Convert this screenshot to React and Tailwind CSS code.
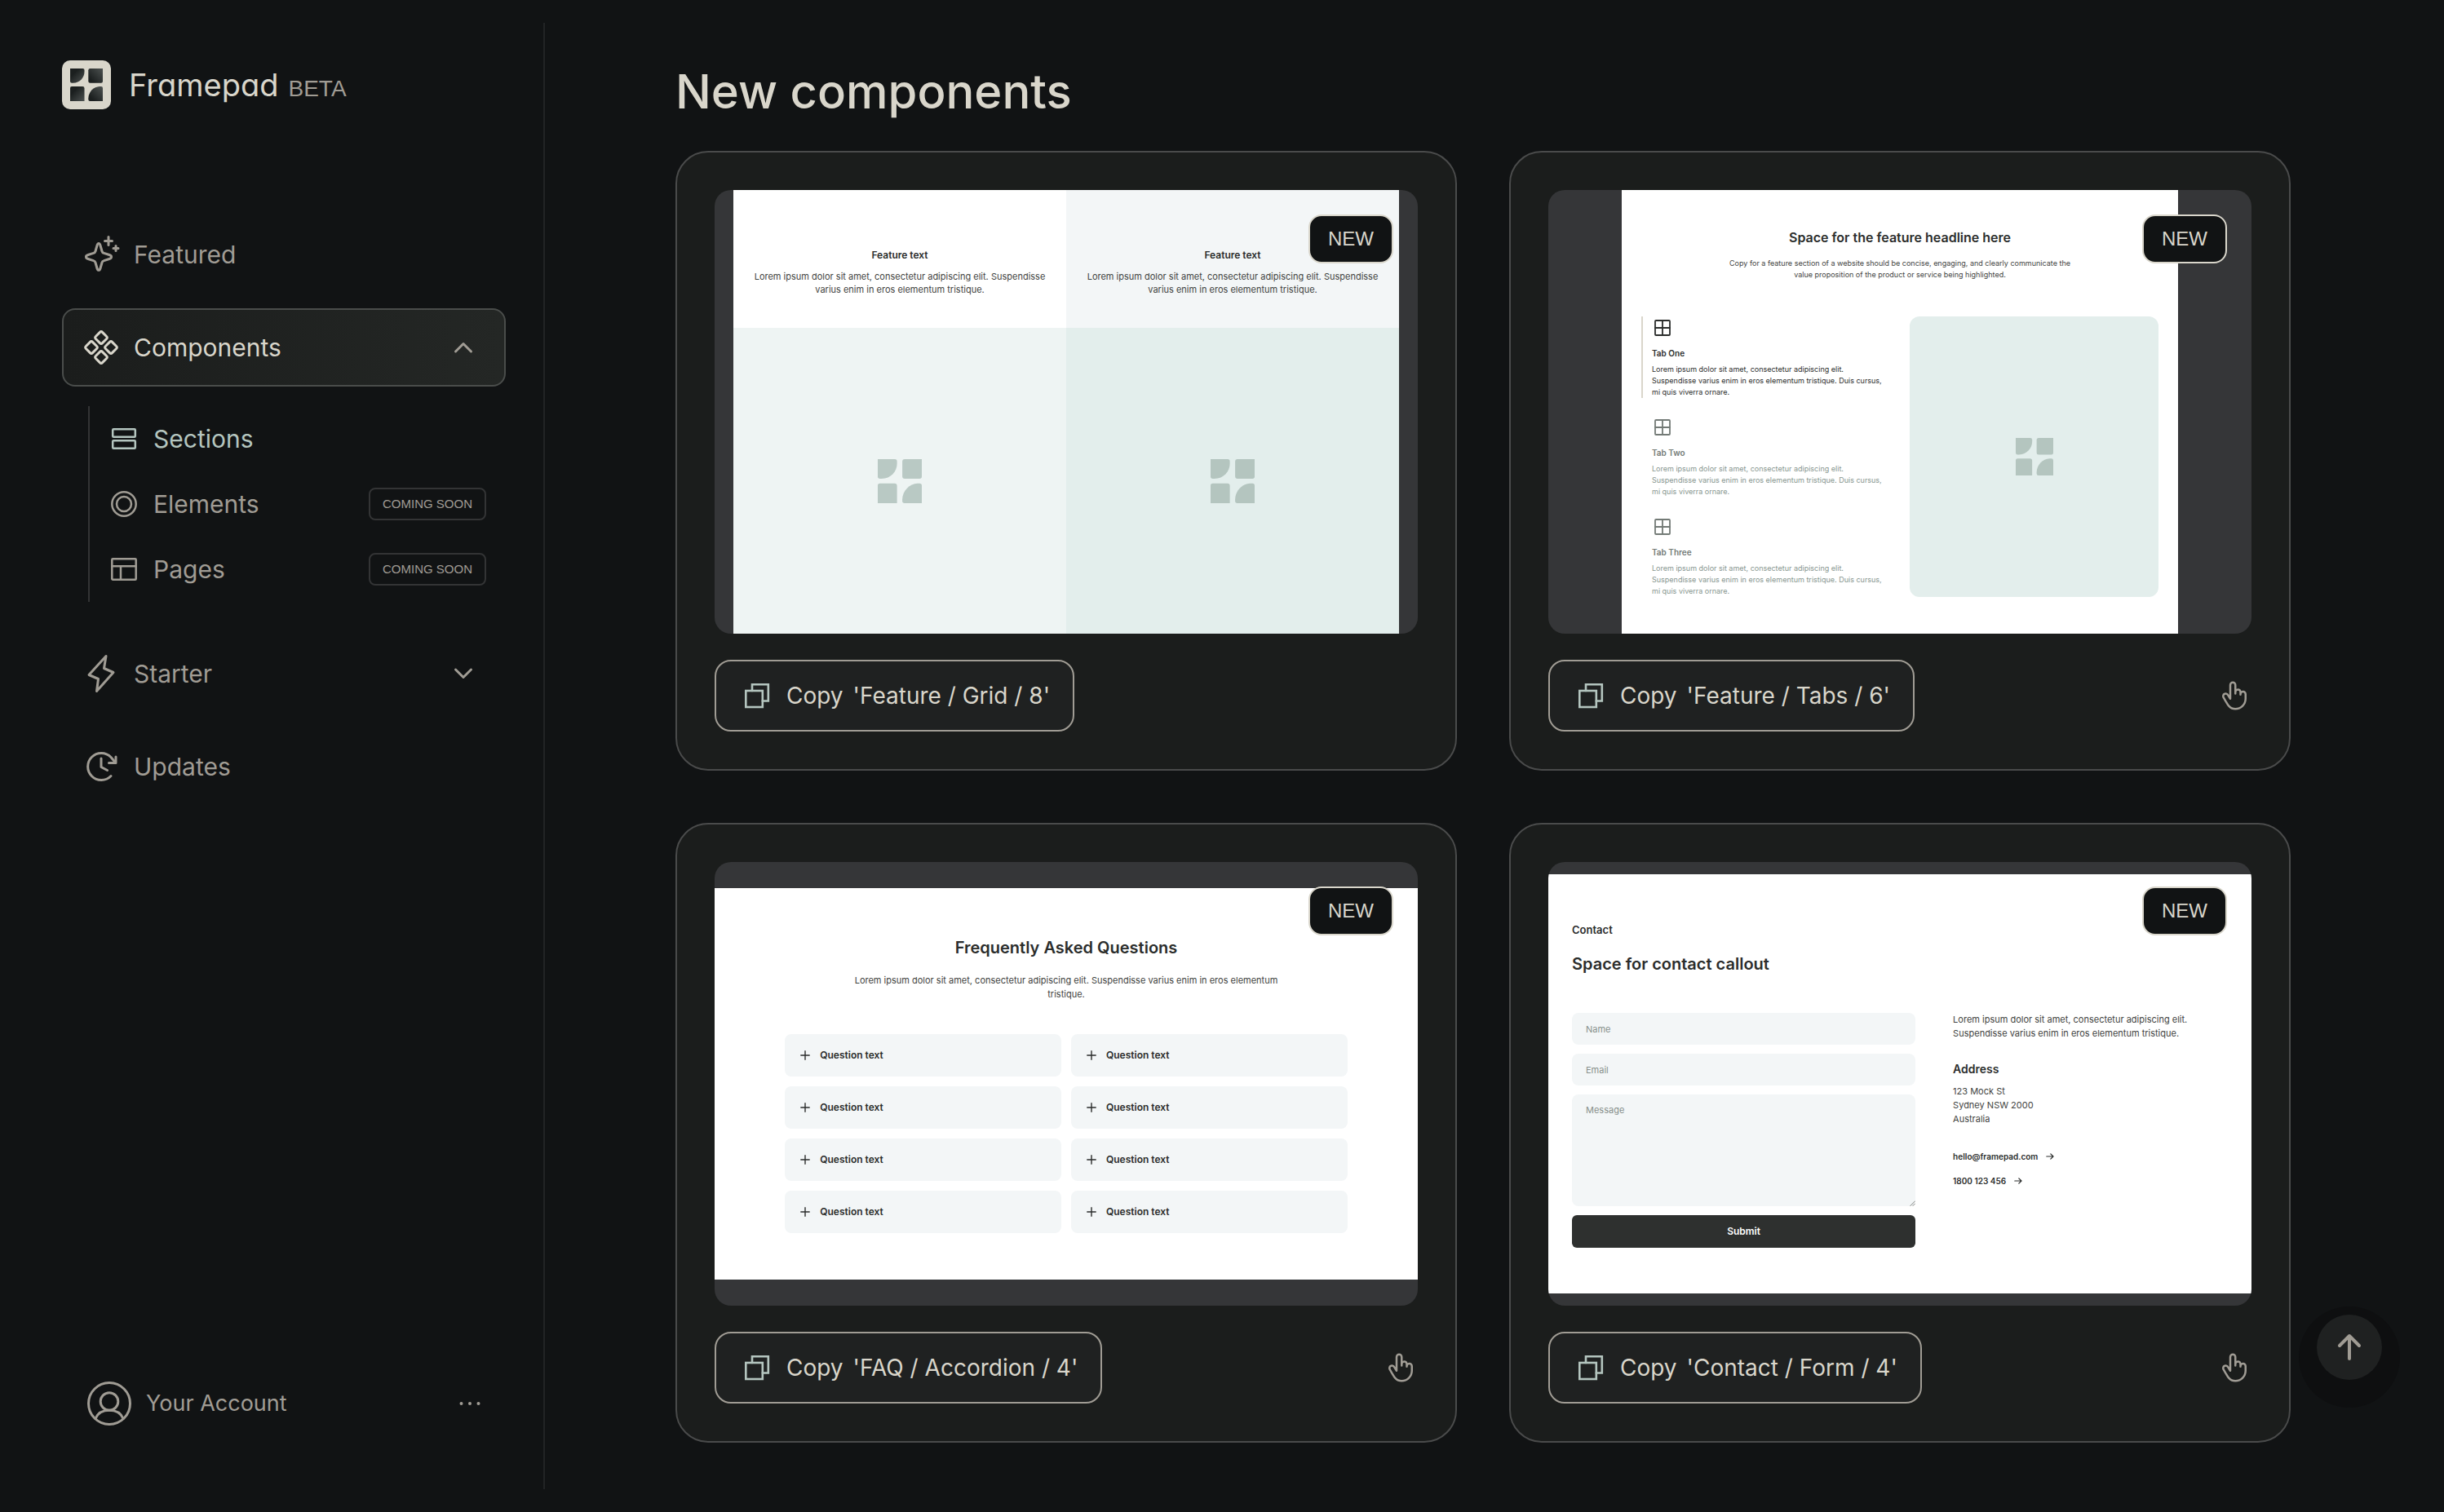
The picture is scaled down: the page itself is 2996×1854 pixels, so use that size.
import { PiHandPointing } from "react-icons/pi";

function Tiles({ className }) {
  return (
    <svg viewBox="0 0 40 40" className={className} fill="currentColor" aria-hidden="true">
      <path d="M0 0H15.5A2 2 0 0 1 17.5 2V4C17.5 11 12 17.5 3.5 17.8H2A2 2 0 0 1 0 15.8Z" />
      <path d="M24.5 0H40V15.8A2 2 0 0 1 38 17.8H24.5A2.2 2.2 0 0 1 22.3 15.6V2.2A2.2 2.2 0 0 1 24.5 0Z" />
      <path d="M2 22H15.3A2.2 2.2 0 0 1 17.5 24.2V40H0V24.2A2 2 0 0 1 2 22Z" />
      <path d="M38 22A2 2 0 0 1 40 24V40H24.3A2 2 0 0 1 22.3 38V36.5C22.5 28.500 29 22.300 36 22Z" />
    </svg>
  );
}

function LogoMark() {
  return (
    <svg viewBox="0 0 60 60" className="size-[60px]" aria-hidden="true">
      <defs>
        <linearGradient id="tile" x1="0" y1="0" x2="1" y2="1">
          <stop offset="0.3" stopColor="#1b1f1f" />
          <stop offset="1" stopColor="#4d5251" />
        </linearGradient>
        <linearGradient id="tileBack" x1="0" y1="1" x2="1" y2="0">
          <stop offset="0.2" stopColor="#1b1f1f" />
          <stop offset="1" stopColor="#4d5251" />
        </linearGradient>
      </defs>
      <rect width="60" height="60" rx="10" fill="#d9d6cb" />
      <g transform="translate(10 10)">
        <path fill="url(#tile)" d="M0 0H15.500A2 2 0 0 1 17.5 2V4C17.5 11 12 17.5 3.5 17.8H2A2 2 0 0 1 0 15.8Z" />
        <path fill="url(#tileBack)" d="M24.500 0H40V15.8A2 2 0 0 1 38 17.8H24.5A2.2 2.2 0 0 1 22.3 15.6V2.2A2.2 2.2 0 0 1 24.5 0Z" />
        <path fill="url(#tile)" d="M2 22H15.3A2.2 2.2 0 0 1 17.5 24.2V40H0V24.2A2 2 0 0 1 2 22Z" />
        <path fill="url(#tileBack)" d="M38 22A2 2 0 0 1 40 24V40H24.3A2 2 0 0 1 22.3 38V36.5C22.5 28.5 29 22.3 36 22Z" />
      </g>
    </svg>
  );
}

const stroke = { fill: "none", stroke: "currentColor", strokeLinecap: "round", strokeLinejoin: "round", "aria-hidden": true };

function SparkleIcon() {
  return (
    <svg viewBox="0 0 48 48" className="size-12" strokeWidth="3" {...stroke}>
      <path d="M21 10.500C22 10.500 22.600 11.500 23 13L25 20C25.400 21.400 26 22 27.400 22.400L34 24.500C37.400 25.500 37.400 28.500 34 29.500L27.400 31.600C26 32 25.400 32.600 25 34L23 41C22.200 44 19.800 44 19 41L17 34C16.600 32.600 16 32 14.600 31.600L8 29.500C4.600 28.500 4.600 25.500 8 24.500L14.600 22.400C16 22 16.600 21.400 17 20L19 13C19.400 11.500 20 10.500 21 10.500Z" />
      <path d="M33 2.500V12.500M28.500 7.500H37.500" />
      <path d="M42 13.500V19.500M39 16.500H45" />
    </svg>
  );
}

function ComponentsIcon() {
  const diamond = "M-1.500 -6.600Q0 -8.200 1.500 -6.600L6.600 -1.500Q8.200 0 6.600 1.500L1.500 6.600Q0 8.200 -1.500 6.600L-6.600 1.500Q-8.200 0 -6.600 -1.500Z";
  return (
    <svg viewBox="0 0 48 48" className="size-12" strokeWidth="3" {...stroke}>
      <path transform="translate(24 12)" d={diamond} />
      <path transform="translate(12 24)" d={diamond} />
      <path transform="translate(36 24)" d={diamond} />
      <path transform="translate(24 36)" d={diamond} />
    </svg>
  );
}

function BoltIcon() {
  return (
    <svg viewBox="0 0 48 48" className="size-12" strokeWidth="3" {...stroke}>
      <path d="M30 2.500L9 25.500L20.500 30.500L18.500 45.500L39 22.500L27.500 17.500Z" />
    </svg>
  );
}

function UpdatesIcon() {
  return (
    <svg viewBox="0 0 48 48" className="size-12" strokeWidth="3" {...stroke}>
      <path d="M42 12V19.500H33.500" />
      <path d="M41.500 19L36 12.500A16.500 16.500 0 1 0 36 35.500" />
      <path d="M24 14V24.500L31.500 28.500" />
    </svg>
  );
}

function SectionsIcon() {
  return (
    <svg viewBox="0 0 32 32" className="size-8" strokeWidth="2.500" {...stroke}>
      <rect x="2.200" y="4.200" width="27.600" height="9.500" rx="1" />
      <rect x="2.200" y="18.300" width="27.600" height="9.500" rx="1" />
    </svg>
  );
}

function ElementsIcon() {
  return (
    <svg viewBox="0 0 32 32" className="size-8" strokeWidth="2.500" {...stroke}>
      <circle cx="16" cy="16" r="14.700" />
      <circle cx="16" cy="16" r="9" />
    </svg>
  );
}

function PagesIcon() {
  return (
    <svg viewBox="0 0 32 32" className="size-8" strokeWidth="2.500" {...stroke}>
      <rect x="1.300" y="3.300" width="29.400" height="25.400" rx="1" />
      <path d="M1.300 12.300H30.700M12 12.300V28.700" />
    </svg>
  );
}

function Chevron({ up }) {
  return (
    <svg viewBox="0 0 24 24" className="size-6" strokeWidth="3" {...stroke}>
      <path d={up ? "M2.500 17L12 7.500L21.500 17" : "M2.500 7L12 16.500L21.500 7"} />
    </svg>
  );
}

function UserIcon() {
  return (
    <svg viewBox="0 0 54 54" className="size-[54px]" strokeWidth="3" {...stroke}>
      <circle cx="27" cy="27" r="25.500" />
      <circle cx="27" cy="24.500" r="10.800" />
      <path d="M10 45.500C13 38.500 19.500 35.300 27 35.300C34.500 35.300 41 38.500 44 45.500" />
    </svg>
  );
}

function CopyIcon() {
  return (
    <svg viewBox="0 0 32 32" className="size-8 text-[#b4c5bf]" strokeWidth="2.600" {...stroke} strokeLinejoin="miter">
      <rect x="2.300" y="10" width="20.500" height="20" />
      <path d="M10 10V2.300H29.800V22.500H22.800" />
    </svg>
  );
}

function GridIcon() {
  return (
    <svg viewBox="0 0 20 20" className="size-5" strokeWidth="1.800" {...stroke}>
      <rect x="1" y="1" width="18" height="18" rx="1" />
      <path d="M10 1V19M1 10H19" />
    </svg>
  );
}

function ArrowRight() {
  return (
    <svg viewBox="0 0 10 10" className="size-[10px]" strokeWidth="1.200" {...stroke}>
      <path d="M0.800 5H9M5.800 1.800L9 5L5.800 8.200" />
    </svg>
  );
}

function NavItem({ icon, label, active, open }) {
  return (
    <button
      type="button"
      className={
        "flex h-24 w-full items-center gap-4 rounded-2xl border-2 pl-[22px] pr-[38px] text-[30px] leading-10 " +
        (active
          ? "border-[#4a4d4b] bg-linear-to-r from-[#1b1d1c] to-[#242725] text-[#d9d6cb]"
          : "border-transparent text-[#a09c94]")
      }
    >
      {icon}
      <span>{label}</span>
      {open !== undefined && (
        <span className="ml-auto text-[#a09c94]">
          <Chevron up={open} />
        </span>
      )}
    </button>
  );
}

function SubItem({ icon, label, active, soon }) {
  return (
    <a
      href="#"
      className={
        "flex h-20 items-center gap-5 pl-[26px] pr-6 text-[30px] leading-10 " +
        (active ? "text-[#b4c5bf]" : "text-[#a09c94]")
      }
    >
      {icon}
      <span>{label}</span>
      {soon && (
        <span className="ml-auto flex h-10 items-center rounded-lg border-2 border-[#333435] px-[15px] font-['Liberation_Sans'] text-[15px]">
          COMING SOON
        </span>
      )}
    </a>
  );
}

function Sidebar() {
  return (
    <aside className="my-7 flex w-[668px] shrink-0 flex-col border-r-2 border-[#222425] pb-[78px] pl-[76px] pr-[46px] pt-[46px]">
      <a href="#" className="flex items-center gap-[22px]">
        <LogoMark />
        <span className="flex items-baseline gap-3">
          <span className="text-[38px] leading-[60px] text-[#d9d6cb] [font-feature-settings:'cv11']">Framepad</span>
          <span className="font-['Liberation_Sans'] text-[28px] text-[#a09c94]">BETA</span>
        </span>
      </a>
      <nav className="mt-[130px] flex flex-col gap-[18px]">
        <NavItem icon={<SparkleIcon />} label="Featured" />
        <NavItem icon={<ComponentsIcon />} label="Components" active open />
        <div className="mb-[22px] ml-8 mt-[6px] flex flex-col border-l-2 border-[#333435]">
          <SubItem icon={<SectionsIcon />} label="Sections" active />
          <SubItem icon={<ElementsIcon />} label="Elements" soon />
          <SubItem icon={<PagesIcon />} label="Pages" soon />
        </div>
        <NavItem icon={<BoltIcon />} label="Starter" open={false} />
        <NavItem icon={<UpdatesIcon />} label="Updates" />
      </nav>
      <button type="button" className="mt-auto flex items-center gap-[18px] pl-[31px] pr-[31px] text-[27px] text-[#a09c94]">
        <UserIcon />
        <span>Your Account</span>
        <svg viewBox="0 0 26 6" className="ml-auto h-[6px] w-[26px]" fill="currentColor" aria-hidden="true">
          <circle cx="2.500" cy="3" r="2" />
          <circle cx="13" cy="3" r="2" />
          <circle cx="23.500" cy="3" r="2" />
        </svg>
      </button>
    </aside>
  );
}

function Card({ name, hand, children }) {
  return (
    <article className="rounded-[40px] border-2 border-[#4a4b4b] bg-[#1b1d1c] p-[46px]">
      <div className="relative flex aspect-[862/544] flex-col justify-center overflow-hidden rounded-[20px] bg-[#353638]">
        {children}
        <span className="absolute right-[30px] top-[30px] flex h-[60px] items-center rounded-2xl border-2 border-[#d9d6cb] bg-[#111314] px-[22px] font-['Liberation_Sans'] text-2xl text-[#d9d6cb]">
          NEW
        </span>
      </div>
      <div className="mt-8 flex items-center justify-between">
        <button
          type="button"
          className="flex h-[88px] items-center rounded-[20px] border-2 border-[#a09c94] bg-[#1f2121] pl-[34px] pr-7 text-[28px] text-[#d9d6cb]"
        >
          <CopyIcon />
          <span className="ml-5">Copy</span>
          <span className="ml-3">'{name}'</span>
        </button>
        {hand && <PiHandPointing className="mr-px size-10 text-[#a09c94]" />}
      </div>
    </article>
  );
}

function FeatureCell({ className }) {
  return (
    <div className={"pt-[70px] text-center text-[11px] leading-4 " + className}>
      <h3 className="mb-2 text-xs font-semibold leading-5 text-[#2b2d2c]">Feature text</h3>
      <p>
        Lorem ipsum dolor sit amet, consectetur adipiscing elit. Suspendisse
        <br />
        varius enim in eros elementum tristique.
      </p>
    </div>
  );
}

function GridPreview() {
  return (
    <div className="mx-auto grid w-[816px] max-w-full flex-1 grid-cols-2 grid-rows-[169px_1fr] text-[#3f4341]">
      <FeatureCell className="bg-white" />
      <FeatureCell className="bg-[#f3f6f7]" />
      <div className="flex items-center justify-center bg-[#eef4f3]">
        <Tiles className="size-[54px] text-[#b9c9c4]" />
      </div>
      <div className="flex items-center justify-center bg-[#e3eeec]">
        <Tiles className="size-[54px] text-[#b4c5bf]" />
      </div>
    </div>
  );
}

function TabEntry({ title, active }) {
  return (
    <button
      type="button"
      className={
        "block border-l-2 pl-[11px] pt-1 text-left " +
        (active ? "border-[#d9d6cb] text-[#2b2d2c]" : "border-transparent text-[#737a76]")
      }
    >
      <span className="block pl-[3px]">
        <GridIcon />
      </span>
      <span className="mt-[14px] block text-[10px] font-semibold leading-[14px]">{title}</span>
      <span className={"mt-[6px] block text-[9px] leading-[14px] " + (active ? "" : "text-[#87968f]")}>
        Lorem ipsum dolor sit amet, consectetur adipiscing elit.
        <br />
        Suspendisse varius enim in eros elementum tristique. Duis cursus,
        <br />
        mi quis viverra ornare.
      </span>
    </button>
  );
}

function TabsPreview() {
  return (
    <div className="mx-auto w-[682px] max-w-full flex-1 bg-white px-6 pt-12 text-[#3f4341]">
      <h3 className="text-center text-base font-semibold leading-5 text-[#2b2d2c]">Space for the feature headline here</h3>
      <p className="mt-[15px] text-center text-[9px] leading-[14px]">
        Copy for a feature section of a website should be concise, engaging, and clearly communicate the
        <br />
        value proposition of the product or service being highlighted.
      </p>
      <div className="mt-11 grid grid-cols-2 gap-6">
        <div className="flex flex-col gap-[22px]">
          <TabEntry title="Tab One" active />
          <TabEntry title="Tab Two" />
          <TabEntry title="Tab Three" />
        </div>
        <div className="flex items-center justify-center rounded-xl bg-[#e3eeec]">
          <Tiles className="size-[46px] text-[#b4c5bf]" />
        </div>
      </div>
    </div>
  );
}

function FaqPreview() {
  return (
    <div className="bg-white px-[10%] pb-[57px] pt-[61px] text-[#3f4341]">
      <h3 className="text-center text-xl font-semibold leading-6 text-[#2b2d2c]">Frequently Asked Questions</h3>
      <p className="mt-5 text-center text-[11px] leading-[17px]">
        Lorem ipsum dolor sit amet, consectetur adipiscing elit. Suspendisse varius enim in eros elementum
        <br />
        tristique.
      </p>
      <div className="mt-10 grid grid-cols-2 gap-3">
        {Array.from({ length: 8 }, (_, i) => (
          <button
            key={i}
            type="button"
            className="flex h-[52px] items-center gap-3 rounded-lg bg-[#f3f6f7] px-[19px] text-xs font-semibold text-[#2b2d2c]"
          >
            <svg viewBox="0 0 12 12" className="size-3" strokeWidth="1.400" {...stroke}>
              <path d="M6 0.800V11.200M0.800 6H11.200" />
            </svg>
            Question text
          </button>
        ))}
      </div>
    </div>
  );
}

const field = "w-full rounded-lg bg-[#f3f6f7] px-[17px] text-[11px] placeholder:text-[#87908b] outline-none";

function ContactPreview() {
  return (
    <div className="bg-white px-[29px] pb-14 pt-[58px] text-[11px] leading-[17px] text-[#3f4341]">
      <p className="text-[13px] font-semibold leading-5 text-[#2b2d2c]">Contact</p>
      <h3 className="mt-5 text-xl font-semibold leading-6 text-[#2b2d2c]">Space for contact callout</h3>
      <div className="mt-12 grid grid-cols-[5fr_4fr] gap-[46px]">
        <form className="flex flex-col gap-[11px]" onSubmit={(e) => e.preventDefault()}>
          <input aria-label="Name" placeholder="Name" className={field + " h-[39px]"} />
          <input aria-label="Email" placeholder="Email" className={field + " h-[39px]"} />
          <div className="relative flex">
            <textarea aria-label="Message" placeholder="Message" className={field + " h-[137px] resize-none pt-[11px]"} />
            <svg viewBox="0 0 8 8" className="absolute bottom-0 right-0 size-[7px] text-[#6b6f6d]" strokeWidth="1" {...stroke}>
              <path d="M1 7.500L7.500 1M4.500 7.500L7.500 4.500" />
            </svg>
          </div>
          <button type="submit" className="h-10 rounded-md bg-[#2e302f] text-xs font-semibold text-white">
            Submit
          </button>
        </form>
        <div>
          <p>
            Lorem ipsum dolor sit amet, consectetur adipiscing elit.
            <br />
            Suspendisse varius enim in eros elementum tristique.
          </p>
          <h4 className="mt-[26px] text-sm font-semibold leading-[18px] text-[#2b2d2c]">Address</h4>
          <address className="mt-[10px] not-italic">
            123 Mock St
            <br />
            Sydney NSW 2000
            <br />
            Australia
          </address>
          <div className="mt-[29px] flex flex-col items-start gap-[14px] text-[10px] font-semibold leading-4 text-[#2b2d2c]">
            <a href="mailto:hello@framepad.com" className="flex items-center gap-[10px]">
              hello@framepad.com <ArrowRight />
            </a>
            <a href="tel:1800123456" className="flex items-center gap-[10px]">
              1800 123 456 <ArrowRight />
            </a>
          </div>
        </div>
      </div>
    </div>
  );
}

export default function App() {
  return (
    <div className="flex min-h-screen bg-[#111314] font-['Inter',sans-serif]">
      <Sidebar />
      <main className="min-w-0 flex-1 pb-20 pl-40 pr-[188px] pt-[76px]">
        <h1 className="text-[58px] font-medium leading-[72px] text-[#d9d6cb]">New components</h1>
        <div className="mt-[37px] grid grid-cols-2 gap-16">
          <Card name="Feature / Grid / 8">
            <GridPreview />
          </Card>
          <Card name="Feature / Tabs / 6" hand>
            <TabsPreview />
          </Card>
          <Card name="FAQ / Accordion / 4" hand>
            <FaqPreview />
          </Card>
          <Card name="Contact / Form / 4" hand>
            <ContactPreview />
          </Card>
        </div>
      </main>
      <button
        type="button"
        aria-label="Back to top"
        className="fixed bottom-[162px] right-[76px] flex size-20 items-center justify-center rounded-full bg-[#1f2121] text-[#a09c94] shadow-[0_12px_0_22px_#0e0f10]"
      >
        <svg viewBox="0 0 32 36" className="h-9 w-8" strokeWidth="4" {...stroke}>
          <path d="M16 32V4M4 16L16 4L28 16" />
        </svg>
      </button>
    </div>
  );
}
